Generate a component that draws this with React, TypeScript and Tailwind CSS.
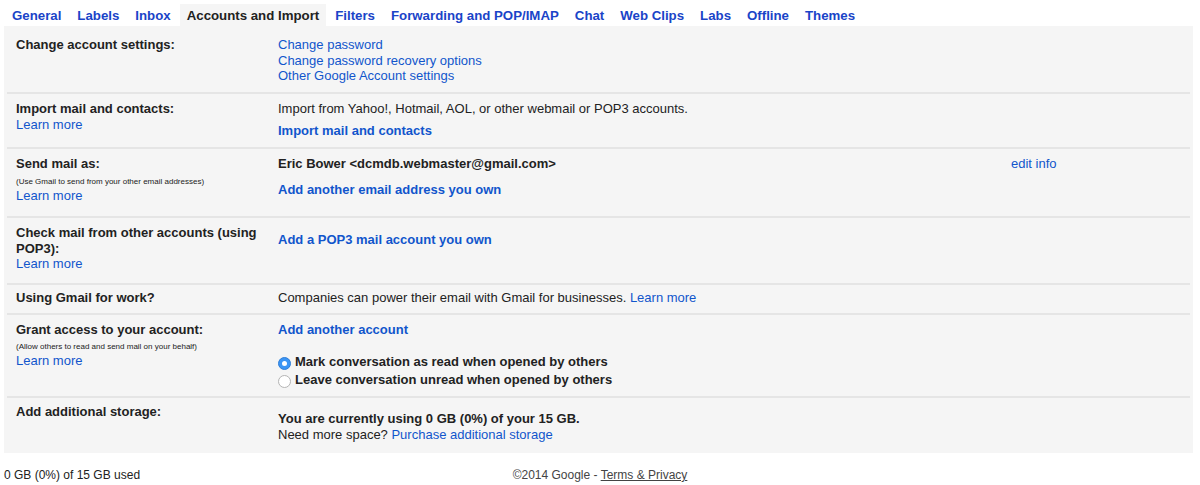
import React from 'react';

const font = { fontFamily: '"Liberation Sans", Arial, sans-serif' };
const link = 'text-[#1155cc] cursor-pointer hover:underline';

const tabs = ['General', 'Labels', 'Inbox', 'Accounts and Import', 'Filters', 'Forwarding and POP/IMAP', 'Chat', 'Web Clips', 'Labs', 'Offline', 'Themes'];

const Radio: React.FC<{ checked?: boolean }> = ({ checked }) =>
  checked ? (
    <span className="mr-[4px] mt-[3px] flex h-[13px] w-[13px] shrink-0 items-center justify-center rounded-full bg-[#3b95f5] border border-[#2f7fd8]">
      <span className="h-[5px] w-[5px] rounded-full bg-white" />
    </span>
  ) : (
    <span className="mr-[4px] mt-[3px] h-[13px] w-[13px] shrink-0 rounded-full border border-[#b4b4b4] bg-white" />
  );

export default function App() {
  return (
    <div className="h-[485px] w-[1200px] overflow-hidden bg-white text-[13px] leading-[16px] text-[#222]" style={font}>
      {/* tabs */}
      <div className="flex gap-[2px] pl-[5px] pt-[4px]">
        {tabs.map(t => (
          <div
            key={t}
            className={
              'h-[22px] px-[7px] pt-[4px] text-[13.25px] font-bold ' +
              (t === 'Accounts and Import' ? 'bg-[#f5f5f5] text-[#222]' : 'text-[#1a44c8] cursor-pointer')
            }
          >
            {t}
          </div>
        ))}
      </div>

      {/* settings panel */}
      <div className="ml-[4px] mr-[7px] bg-[#f5f5f5] px-[3px]">
        {/* change account settings */}
        <div className="flex h-[68px] border-b-2 border-[#e5e5e5] pt-[11px]">
          <div className="w-[271px] pl-[9px] pr-[12px] font-bold">Change account settings:</div>
          <div className="flex flex-col leading-[15.5px]">
            <span className={link}>Change password</span>
            <span className={link}>Change password recovery options</span>
            <span className={link}>Other Google Account settings</span>
          </div>
        </div>

        {/* import */}
        <div className="flex h-[55px] border-b-2 border-[#e5e5e5] pt-[7px]">
          <div className="w-[271px] pl-[9px] pr-[12px]">
            <div className="font-bold">Import mail and contacts:</div>
            <div className={link}>Learn more</div>
          </div>
          <div>
            <div>Import from Yahoo!, Hotmail, AOL, or other webmail or POP3 accounts.</div>
            <div className={'mt-[6px] font-bold ' + link}>Import mail and contacts</div>
          </div>
        </div>

        {/* send mail as */}
        <div className="flex h-[69px] border-b-2 border-[#e5e5e5] pt-[7px]">
          <div className="w-[271px] pl-[9px] pr-[12px]">
            <div className="font-bold">Send mail as:</div>
            <div className="mt-[3px] text-[8px] leading-[13px]">(Use Gmail to send from your other email addresses)</div>
            <div className={link}>Learn more</div>
          </div>
          <div className="flex-1">
            <div className="font-bold">Eric Bower &lt;dcmdb.webmaster@gmail.com&gt;</div>
            <div className={'mt-[10px] font-bold ' + link}>Add another email address you own</div>
          </div>
          <div className="w-[179px]">
            <span className={link}>edit info</span>
          </div>
        </div>

        {/* pop3 */}
        <div className="flex h-[67px] border-b-2 border-[#e5e5e5] pt-[7px]">
          <div className="w-[271px] pl-[9px] pr-[12px] leading-[15.5px]">
            <div className="font-bold">Check mail from other accounts (using POP3):</div>
            <div className={link}>Learn more</div>
          </div>
          <div className="pt-[7px]">
            <span className={'font-bold ' + link}>Add a POP3 mail account you own</span>
          </div>
        </div>

        {/* gmail for work */}
        <div className="flex h-[30px] border-b-2 border-[#e5e5e5] pt-[5px]">
          <div className="w-[271px] pl-[9px] pr-[12px] font-bold">Using Gmail for work?</div>
          <div>
            Companies can power their email with Gmail for businesses. <span className={link}>Learn more</span>
          </div>
        </div>

        {/* grant access */}
        <div className="flex h-[83px] border-b-2 border-[#e5e5e5] pt-[7px]">
          <div className="w-[271px] pl-[9px] pr-[12px]">
            <div className="font-bold">Grant access to your account:</div>
            <div className="mt-[2px] text-[8px] leading-[13px]">(Allow others to read and send mail on your behalf)</div>
            <div className={link}>Learn more</div>
          </div>
          <div>
            <div className={'font-bold ' + link}>Add another account</div>
            <div className="mt-[16px] flex items-start font-bold">
              <Radio checked />
              <span>Mark conversation as read when opened by others</span>
            </div>
            <div className="mt-[2px] flex items-start font-bold">
              <Radio />
              <span>Leave conversation unread when opened by others</span>
            </div>
          </div>
        </div>

        {/* storage */}
        <div className="flex h-[55px] pt-[6px]">
          <div className="w-[271px] pl-[9px] pr-[12px] font-bold">Add additional storage:</div>
          <div className="pt-[7px]">
            <div className="font-bold">You are currently using 0 GB (0%) of your 15 GB.</div>
            <div>
              Need more space? <span className={link}>Purchase additional storage</span>
            </div>
          </div>
        </div>
      </div>

      {/* footer */}
      <div className="mt-[15px] flex justify-between px-[4px] text-[12px] leading-[15px] text-[#222]">
        <div className="w-[300px]">
          <div>0 GB (0%) of 15 GB used</div>
          <div className={link}>Manage</div>
        </div>
        <div className="text-[#444]">
          ©2014 Google - <span className="underline cursor-pointer">Terms &amp; Privacy</span>
        </div>
        <div className="w-[300px] pt-[15px] pr-[26px] text-right">
          <div>Last account activity: 15 minutes ago</div>
          <div>Details</div>
        </div>
      </div>
    </div>
  );
}
